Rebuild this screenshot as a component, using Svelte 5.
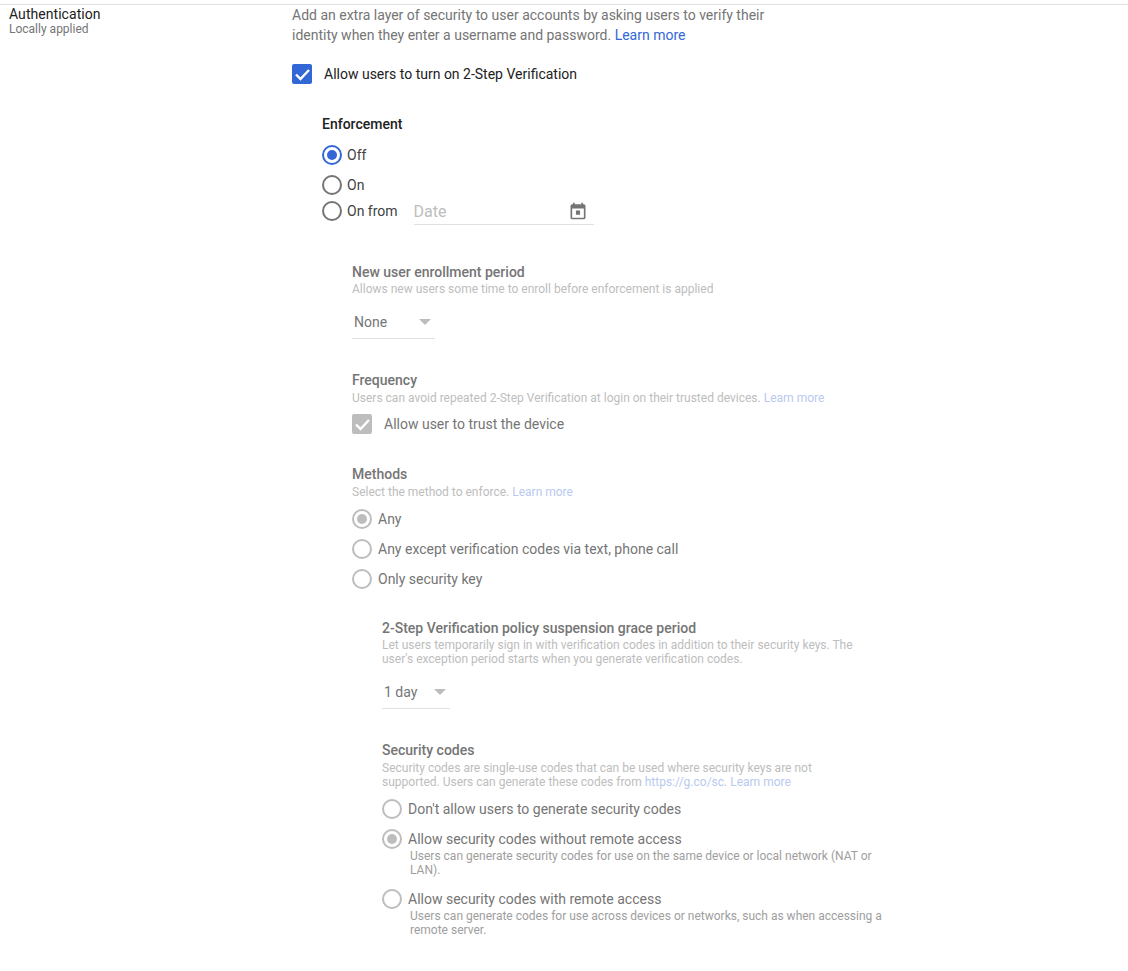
<script>
  const radio = (label, on = false) => ({ label, on });
  const methods = [radio('Any', true), radio('Any except verification codes via text, phone call'), radio('Only security key')];
</script>

{#snippet check(disabled)}
  <span class="check" class:disabled>
    <svg viewBox="0 0 20 20" width="20" height="20"><path d="M4 10.5l4.500 4.500 8.500-9" fill="none" stroke="#fff" stroke-width="2.400"/></svg>
  </span>
{/snippet}

{#snippet dot(on, disabled)}
  <span class="radio" class:on class:disabled></span>
{/snippet}

{#snippet caret()}
  <svg class="caret" viewBox="0 0 12 6" width="12" height="6"><path d="M0 0h12L6 6z"/></svg>
{/snippet}

<div class="page">
  <section class="row">
    <div class="side">
      <div class="title">Authentication</div>
      <div class="sub">Locally applied</div>
    </div>
    <div class="main">
      <p class="intro">Add an extra layer of security to user accounts by asking users to verify their<br />identity when they enter a username and password. <a href="#top">Learn more</a></p>
      <div class="opt top-check">{@render check(false)}<span class="check-label">Allow users to turn on 2-Step Verification</span></div>

      <div class="enforce">
        <h3 class="strong">Enforcement</h3>
        <div class="opt r-off">{@render dot(true, false)}<span class="radio-label">Off</span></div>
        <div class="opt r-on">{@render dot(false, false)}<span class="radio-label">On</span></div>
        <div class="opt r-from">
          {@render dot(false, false)}<span class="radio-label">On from</span>
          <div class="date">
            <span>Date</span>
            <svg viewBox="0 0 24 24" width="20" height="20"><path fill="#757575" d="M19 4h-1V2h-2v2H8V2H6v2H5a2 2 0 0 0-2 2v14a2 2 0 0 0 2 2h14a2 2 0 0 0 2-2V6a2 2 0 0 0-2-2zm0 16H5V9h14v11zM9.500 11.500h5v5h-5z"/></svg>
          </div>
        </div>

        <div class="off">
          <h3 class="enroll">New user enrollment period</h3>
          <p class="desc">Allows new users some time to enroll before enforcement is applied</p>
          <div class="select none"><span>None</span>{@render caret()}</div>

          <h3 class="freq">Frequency</h3>
          <p class="desc tight">Users can avoid repeated 2-Step Verification at login on their trusted devices. <a href="#top">Learn more</a></p>
          <div class="opt trust">{@render check(true)}<span class="check-label">Allow user to trust the device</span></div>

          <h3 class="meth">Methods</h3>
          <p class="desc tight">Select the method to enforce. <a href="#top">Learn more</a></p>
          <div class="group">
            {#each methods as m}
              <div class="opt">{@render dot(m.on, true)}<span class="radio-label wide">{m.label}</span></div>
            {/each}
          </div>

          <div class="nested">
            <h3 class="grace">2-Step Verification policy suspension grace period</h3>
            <p class="desc">Let users temporarily sign in with verification codes in addition to their security keys. The<br />user's exception period starts when you generate verification codes.</p>
            <div class="select day"><span>1 day</span>{@render caret()}</div>

            <h3 class="codes">Security codes</h3>
            <p class="desc tight">Security codes are single-use codes that can be used where security keys are not<br />supported. Users can generate these codes from <a href="#top">https://g.co/sc</a>. <a href="#top">Learn more</a></p>
            <div class="opt first">{@render dot(false, true)}<span class="radio-label wide">Don't allow users to generate security codes</span></div>
            <div class="opt next">{@render dot(true, true)}<span class="radio-label wide">Allow security codes without remote access</span></div>
            <p class="desc hint">Users can generate security codes for use on the same device or local network (NAT or<br />LAN).</p>
            <div class="opt last">{@render dot(false, true)}<span class="radio-label wide">Allow security codes with remote access</span></div>
            <p class="desc hint">Users can generate codes for use across devices or networks, such as when accessing a<br />remote server.</p>
          </div>
        </div>
      </div>
    </div>
  </section>
</div>

<style>
  :global(body) {
    margin: 0;
    background: #fff;
    font-family: Roboto, "Liberation Sans", sans-serif;
    -webkit-font-smoothing: antialiased;
  }
  .page { padding-top: 4px; min-height: 967px; box-sizing: border-box; }
  .row { border-top: 1px solid #e0e0e0; display: grid; grid-template-columns: 292px 1fr; }
  .side { padding-left: 9px; }
  .title { font-size: 14px; line-height: 18px; color: #212121; letter-spacing: .05px; }
  .sub { font-size: 12px; line-height: 12px; color: #757575; }
  p, h3 { margin: 0; }
  a { color: #3367d6; text-decoration: none; }
  .intro { font-size: 14px; line-height: 20px; color: #757575; }
  .opt { display: flex; align-items: center; height: 20px; }
  .top-check { margin-top: 19px; }
  .check { width: 20px; height: 20px; border-radius: 2px; background: #3367d6; flex: none; display: block; }
  .check svg { display: block; }
  .check.disabled { background: #bdbdbd; }
  .check-label { margin-left: 12px; font-size: 14px; color: #212121; }
  .enforce { padding-left: 30px; }
  h3 { font-size: 14px; line-height: 20px; font-weight: 500; color: #757575; }
  h3.strong { color: #212121; margin-top: 30px; }
  .radio { width: 20px; height: 20px; border: 2px solid #757575; border-radius: 50%; box-sizing: border-box; flex: none; position: relative; }
  .radio.on { border-color: #3367d6; }
  .radio.on::after { content: ""; position: absolute; inset: 3px; border-radius: 50%; background: #3367d6; }
  .radio.disabled { border-color: #bdbdbd; }
  .radio.disabled.on::after { background: #bdbdbd; }
  .radio-label { margin-left: 5px; font-size: 14px; color: #424242; }
  .radio-label.wide { margin-left: 6px; color: #757575; }
  .r-off { margin-top: 11px; }
  .r-on { margin-top: 10px; }
  .r-from { margin-top: 3px; height: 26px; }
  .date { margin-left: 16px; width: 180px; height: 27px; align-self: flex-start; box-sizing: border-box; border-bottom: 1px solid #e0e0e0; display: flex; align-items: center; justify-content: space-between; font-size: 16px; color: #bdbdbd; padding-right: 6px; }
  .off { padding-left: 30px; }
  .desc { font-size: 12px; line-height: 14px; color: #bdbdbd; }
  .desc a { color: #b9c9ef; }
  .tight { margin-top: 1px; }
  .enroll { margin-top: 38px; }
  .select { margin-top: 10px; height: 33px; box-sizing: border-box; border-bottom: 1px solid #e0e0e0; display: flex; align-items: center; justify-content: space-between; font-size: 14px; color: #757575; padding: 0 4px 0 2px; }
  .none { width: 83px; }
  .day { width: 68px; }
  .caret { fill: #bdbdbd; }
  .freq { margin-top: 31px; }
  .trust { margin-top: 9px; }
  .trust .check-label { color: #757575; }
  .meth { margin-top: 30px; }
  .group { display: flex; flex-direction: column; gap: 10px; margin-top: 10px; }
  .nested { padding-left: 30px; }
  .grace { margin-top: 29px; }
  .codes { margin-top: 31px; }
  .first { margin-top: 10px; }
  .next { margin-top: 10px; }
  .last { margin-top: 12px; }
  .hint { padding-left: 28px; color: #9e9e9e; }
</style>
